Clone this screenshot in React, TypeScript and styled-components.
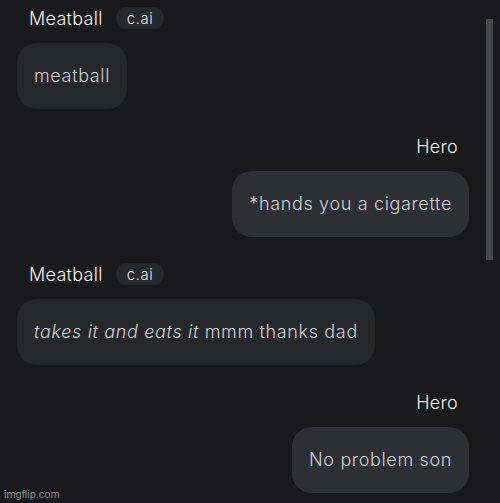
import React from 'react';
import styled, { createGlobalStyle } from 'styled-components';

const GlobalStyle = createGlobalStyle`
  html, body {
    margin: 0;
    padding: 0;
    background: #19191b;
  }
  body {
    font-family: Inter, "Noto Sans", sans-serif;
  }
`;

const Page = styled.div`
  position: relative;
  width: 500px;
  height: 503px;
  overflow: hidden;
  background: #19191b;
  box-sizing: border-box;
  padding: 7px 31px 0 17px;
  display: flex;
  flex-direction: column;
  gap: 26px;
`;

const Group = styled.div<{ $user?: boolean }>`
  display: flex;
  flex-direction: column;
  align-items: ${(p) => (p.$user ? 'flex-end' : 'flex-start')};
  gap: 14px;
`;

const Header = styled.div<{ $user?: boolean }>`
  height: 22px;
  display: flex;
  align-items: center;
  gap: 13px;
  padding: ${(p) => (p.$user ? '0 11px 0 0' : '0 0 0 12px')};
`;

const Name = styled.span`
  font-size: 18px;
  font-weight: 300;
  color: #f4f4f5;
  letter-spacing: 0.3px;
`;

const Badge = styled.span`
  height: 22px;
  padding: 0 11px;
  border-radius: 11px;
  background: #27282c;
  color: #e6e6e8;
  font-size: 15px;
  font-weight: 300;
  letter-spacing: 0.5px;
  display: flex;
  align-items: center;
`;

const Bubble = styled.div<{ $user?: boolean }>`
  background: ${(p) => (p.$user ? '#2e2f34' : '#26272b')};
  color: #cfd0d4;
  font-size: 18px;
  font-weight: 300;
  letter-spacing: 0.65px;
  line-height: 24px;
  padding: 21px 17px;
  border-radius: 20px;
  white-space: nowrap;
`;

const Scrollbar = styled.div`
  position: absolute;
  left: 486px;
  top: 19px;
  width: 7px;
  height: 241px;
  background: #46474c;
`;

const Watermark = styled.div`
  position: absolute;
  left: 4px;
  bottom: 3px;
  font-family: "Liberation Sans", Arial, sans-serif;
  font-size: 11px;
  color: #8a8a8c;
`;

export default function App() {
  return (
    <Page>
      <GlobalStyle />
      <Group>
        <Header>
          <Name>Meatball</Name>
          <Badge>c.ai</Badge>
        </Header>
        <Bubble>meatball</Bubble>
      </Group>
      <Group $user>
        <Header $user>
          <Name>Hero</Name>
        </Header>
        <Bubble $user>*hands you a cigarette</Bubble>
      </Group>
      <Group>
        <Header>
          <Name>Meatball</Name>
          <Badge>c.ai</Badge>
        </Header>
        <Bubble>
          <em>takes it and eats it</em> mmm thanks dad
        </Bubble>
      </Group>
      <Group $user>
        <Header $user>
          <Name>Hero</Name>
        </Header>
        <Bubble $user>No problem son</Bubble>
      </Group>
      <Scrollbar />
      <Watermark>imgflip.com</Watermark>
    </Page>
  );
}
